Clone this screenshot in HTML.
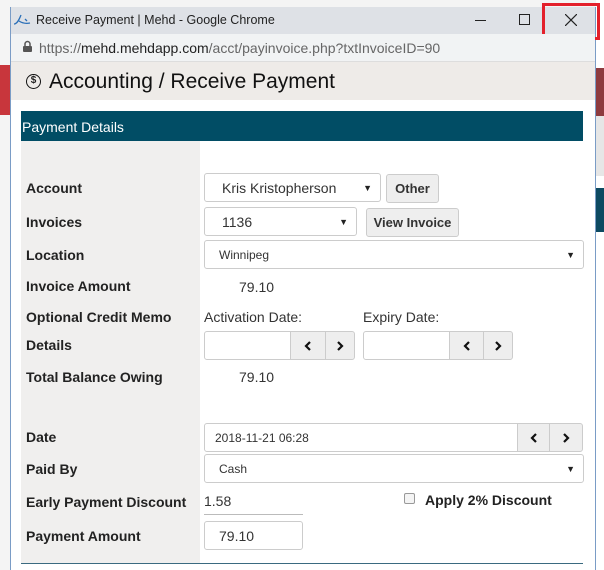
<!DOCTYPE html>
<html><head><meta charset="utf-8"><style>
*{box-sizing:border-box;margin:0;padding:0}
body{width:604px;height:570px;overflow:hidden;position:relative;background:#f4f4f4;font-family:"Liberation Sans",Arial,sans-serif;color:#222}
.a{position:absolute}
.lbl{position:absolute;left:26px;font-size:14px;font-weight:bold;color:#222}
.box{position:absolute;border:1px solid #ccc;border-radius:3px;background:#fff;font-size:14px;color:#333}
.btn{position:absolute;border:1px solid #ccc;border-radius:3px;background:#eee;font-size:13px;font-weight:bold;color:#333;text-align:center}
.arr{position:absolute;right:8px;top:9px;font-size:9px;color:#222}
.chev{position:absolute;border:1px solid #ccc;background:#eee;display:flex;align-items:center;justify-content:center}
.val{position:absolute;font-size:14px;color:#333}
</style></head><body>
<div class="a" style="left:0;top:65px;width:10px;height:50px;background:#c8363c"></div>
<div class="a" style="left:596px;top:0;width:8px;height:570px;background:#fff"></div>
<div class="a" style="left:596px;top:68px;width:8px;height:48px;background:#8e3b3f"></div>
<div class="a" style="left:596px;top:116px;width:8px;height:60px;background:#e6e6e6"></div>
<div class="a" style="left:596px;top:188px;width:8px;height:44px;background:#0d4a61"></div>
<div class="a" style="left:10px;top:7px;width:586px;height:563px;background:#fff;border-left:1px solid #7a9cc6;border-right:1px solid #7a9cc6"></div>
<div class="a" style="left:11px;top:7px;width:584px;height:27px;background:#dee1e6"></div>
<svg class="a" style="left:13px;top:14px" width="18" height="12"><path d="M1 10C4 10 6 6 8 1M6 7C9 9 12 10 17 9M12 5L14 7" stroke="#2a6fb8" stroke-width="1.3" fill="none"/></svg>
<div class="a" style="left:36px;top:13px;font-size:12.5px;color:#222">Receive Payment | Mehd - Google Chrome</div>
<div class="a" style="left:475px;top:20px;width:11px;height:1px;background:#222"></div>
<div class="a" style="left:519px;top:14px;width:11px;height:11px;border:1px solid #222"></div>
<svg class="a" style="left:565px;top:14px" width="12" height="12"><path d="M0 0L12 12M12 0L0 12" stroke="#222" stroke-width="1.2"/></svg>
<div class="a" style="left:542px;top:3px;width:58px;height:37px;border:3px solid #e3202b"></div>
<div class="a" style="left:11px;top:34px;width:584px;height:28px;background:#f1f3f4;border-bottom:1px solid #ddd"></div>
<svg class="a" style="left:22px;top:40px" width="11" height="12"><path d="M3 6V4a2.5 2.5 0 0 1 5 0v2" stroke="#555" stroke-width="1.5" fill="none"/><rect x="1" y="6" width="9" height="6" rx="1" fill="#555"/></svg>
<div class="a" style="left:39px;top:40px;font-size:14px;color:#666">https://<span style="color:#222">mehd.mehdapp.com</span>/acct/payinvoice.php?txtInvoiceID=90</div>
<div class="a" style="left:11px;top:62px;width:584px;height:38px;background:#eeebe8"></div>
<div class="a" style="left:26px;top:74px;width:15px;height:15px;border:1.5px solid #111;border-radius:50%;font-size:10px;font-weight:bold;text-align:center;line-height:12px">$</div>
<div class="a" style="left:49px;top:70px;font-size:21px;color:#111">Accounting / Receive Payment</div>
<div class="a" style="left:21px;top:111px;width:562px;height:30px;background:#014d65;color:#fff;font-size:14px;padding:8px 1px">Payment Details</div>
<div class="a" style="left:21px;top:141px;width:179px;height:422px;background:#f0efee"></div>
<div class="a" style="left:21px;top:563px;width:562px;height:1px;background:#3a6a80"></div>

<div class="lbl" style="top:180px">Account</div>
<div class="lbl" style="top:214px">Invoices</div>
<div class="lbl" style="top:247px">Location</div>
<div class="lbl" style="top:278px">Invoice Amount</div>
<div class="lbl" style="top:309px">Optional Credit Memo</div>
<div class="lbl" style="top:337px">Details</div>
<div class="lbl" style="top:369px">Total Balance Owing</div>
<div class="lbl" style="top:429px">Date</div>
<div class="lbl" style="top:461px">Paid By</div>
<div class="lbl" style="top:494px">Early Payment Discount</div>
<div class="lbl" style="top:528px">Payment Amount</div>

<div class="box" style="left:204px;top:173px;width:177px;height:29px;padding:6px 17px">Kris Kristopherson<span class="arr">▼</span></div>
<div class="btn" style="left:386px;top:174px;width:53px;height:29px;line-height:27px">Other</div>
<div class="box" style="left:204px;top:207px;width:153px;height:29px;padding:6px 17px">1136<span class="arr">▼</span></div>
<div class="btn" style="left:366px;top:208px;width:93px;height:29px;line-height:27px">View Invoice</div>
<div class="box" style="left:204px;top:240px;width:380px;height:29px;padding:7px 14px;font-size:12px">Winnipeg<span class="arr">▼</span></div>
<div class="val" style="left:239px;top:279px">79.10</div>
<div class="val" style="left:204px;top:309px">Activation Date:</div>
<div class="val" style="left:363px;top:309px">Expiry Date:</div>
<div class="box" style="left:204px;top:331px;width:87px;height:29px;border-radius:3px 0 0 3px"></div>
<div class="chev" style="left:290px;top:331px;width:36px;height:29px"><svg width="8" height="10"><path d="M6 1L2 5L6 9" stroke="#111" stroke-width="2.2" fill="none"/></svg></div>
<div class="chev" style="left:325px;top:331px;width:30px;height:29px;border-radius:0 3px 3px 0"><svg width="8" height="10"><path d="M2 1L6 5L2 9" stroke="#111" stroke-width="2.2" fill="none"/></svg></div>
<div class="box" style="left:363px;top:331px;width:87px;height:29px;border-radius:3px 0 0 3px"></div>
<div class="chev" style="left:449px;top:331px;width:35px;height:29px"><svg width="8" height="10"><path d="M6 1L2 5L6 9" stroke="#111" stroke-width="2.2" fill="none"/></svg></div>
<div class="chev" style="left:483px;top:331px;width:30px;height:29px;border-radius:0 3px 3px 0"><svg width="8" height="10"><path d="M2 1L6 5L2 9" stroke="#111" stroke-width="2.2" fill="none"/></svg></div>
<div class="val" style="left:239px;top:369px">79.10</div>

<div class="box" style="left:204px;top:423px;width:314px;height:29px;padding:7px 10px;font-size:12px;border-radius:3px 0 0 3px">2018-11-21 06:28</div>
<div class="chev" style="left:517px;top:423px;width:33px;height:29px"><svg width="8" height="10"><path d="M6 1L2 5L6 9" stroke="#111" stroke-width="2.2" fill="none"/></svg></div>
<div class="chev" style="left:549px;top:423px;width:34px;height:29px;border-radius:0 3px 3px 0"><svg width="8" height="10"><path d="M2 1L6 5L2 9" stroke="#111" stroke-width="2.2" fill="none"/></svg></div>
<div class="box" style="left:204px;top:454px;width:380px;height:29px;padding:7px 14px;font-size:12px">Cash<span class="arr">▼</span></div>
<div class="val" style="left:204px;top:493px">1.58</div>
<div class="a" style="left:204px;top:514px;width:99px;height:1px;background:#bbb"></div>
<div class="a" style="left:404px;top:493px;width:11px;height:11px;border:1px solid #999;border-radius:2px;background:#f4f4f4"></div>
<div class="a" style="left:425px;top:492px;font-size:14px;font-weight:bold;color:#222">Apply 2% Discount</div>
<div class="box" style="left:204px;top:521px;width:99px;height:29px;padding:6px 14px">79.10</div>
</body></html>
